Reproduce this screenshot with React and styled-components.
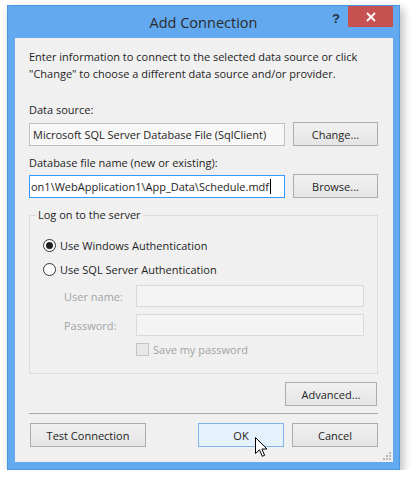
import React from "react";
import styled, { createGlobalStyle } from "styled-components";

const GlobalStyle = createGlobalStyle`
  body {
    margin: 0;
    background: #ffffff;
    font-family: "Open Sans", "Noto Sans", sans-serif;
    font-size: 11px;
    color: #1e1e1e;
  }
`;

const Page = styled.div`
  padding: 5px 0 0 7px;
`;

const Window = styled.div`
  position: relative;
  width: 393px;
  height: 465px;
  box-sizing: border-box;
  background: #63a9ef;
  border: 1px solid #4d95dd;
  display: flex;
  flex-direction: column;
  box-shadow: 3px 4px 9px rgba(0, 0, 0, 0.28);
`;

const TitleBar = styled.div`
  height: 32px;
  display: grid;
  grid-template-columns: 1fr auto 1fr;
`;

const Title = styled.div`
  grid-column: 2;
  align-self: center;
  font-size: 14.5px;
  color: #2b2b2b;
  padding-top: 1px;
`;

const Controls = styled.div`
  grid-column: 3;
  display: flex;
  justify-content: flex-end;
  align-items: flex-start;
  padding-right: 6px;
`;

const HelpButton = styled.div`
  width: 14px;
  margin-right: 5px;
  margin-top: 5px;
  font-family: "Liberation Sans", sans-serif;
  font-weight: bold;
  font-size: 13px;
  color: #23303d;
  text-align: center;
`;

const CloseButton = styled.div`
  width: 45px;
  height: 21px;
  background: #c75050;
  display: flex;
  align-items: center;
  justify-content: center;
`;

const Client = styled.div`
  position: relative;
  flex: 1;
  margin: 0 6px 7px 7px;
  background: #f0f0f0;
  padding: 0 15px 0 14px;
  display: flex;
  flex-direction: column;
`;

const Intro = styled.p`
  margin: 10px 0 0;
  line-height: 17px;
`;

const Label = styled.div`
  margin-top: ${(p) => p.top}px;
  line-height: 16px;
`;

const FieldRow = styled.div`
  margin-top: ${(p) => p.top}px;
  display: flex;
  align-items: center;
  gap: 8px;
  height: 24px;
`;

const TextBox = styled.div`
  flex: 1;
  height: 23px;
  box-sizing: border-box;
  border: 1px solid ${(p) => (p.focused ? "#3399ff" : "#bfbfbf")};
  background: ${(p) => (p.focused ? "#ffffff" : "#f7f7f7")};
  display: flex;
  align-items: center;
  padding-left: ${(p) => (p.focused ? 1 : 3)}px;
  overflow: hidden;
  white-space: nowrap;
`;

const Caret = styled.span`
  display: inline-block;
  width: 1px;
  height: 15px;
  background: #000;
  margin-left: 1px;
`;

const Button = styled.div`
  width: ${(p) => p.w}px;
  height: 24px;
  box-sizing: border-box;
  border: 1px solid ${(p) => (p.hot ? "#7eb4ea" : "#acacac")};
  background: ${(p) =>
    p.hot ? "#e5f1fb" : "linear-gradient(#f0f0f0, #e5e5e5)"};
  display: flex;
  align-items: center;
  justify-content: center;
  flex-shrink: 0;
`;

const Group = styled.fieldset`
  margin: 9px 0 0;
  padding: 14px 13px 16px;
  border: 1px solid #dcdcdc;
  display: flex;
  flex-direction: column;
`;

const Legend = styled.legend`
  margin-left: -7px;
  padding: 0 2px;
  line-height: 16px;
`;

const Option = styled.div`
  display: flex;
  align-items: center;
  height: 16px;
  margin-top: ${(p) => p.top || 0}px;
  gap: 4px;
`;

const Radio = styled.span`
  width: 13px;
  height: 13px;
  box-sizing: border-box;
  border-radius: 50%;
  border: 1px solid #333;
  background: #fff;
  display: flex;
  align-items: center;
  justify-content: center;
  &::after {
    content: "";
    width: 7px;
    height: 7px;
    border-radius: 50%;
    background: ${(p) => (p.checked ? "#1f1f1f" : "transparent")};
  }
`;

const CredRow = styled.div`
  display: flex;
  align-items: center;
  margin-top: ${(p) => p.top}px;
  padding-left: 21px;
`;

const DimLabel = styled.span`
  width: 72px;
  color: #a3a3a3;
`;

const DimBox = styled.div`
  flex: 1;
  height: 22px;
  box-sizing: border-box;
  border: 1px solid #d9d9d9;
  background: #f4f4f4;
`;

const CheckRow = styled.div`
  display: flex;
  align-items: center;
  gap: 4px;
  margin-top: 5px;
  padding-left: 93px;
  height: 16px;
  color: #a3a3a3;
`;

const CheckBox = styled.span`
  width: 13px;
  height: 13px;
  box-sizing: border-box;
  border: 1px solid #c4c4c4;
  background: #e8e8e8;
`;

const RightRow = styled.div`
  margin-top: 8px;
  display: flex;
  justify-content: flex-end;
  padding-right: 1px;
`;

const Separator = styled.div`
  margin-top: 7px;
  height: 1px;
  background: #a8a8a8;
`;

const ButtonBar = styled.div`
  margin-top: 9px;
  display: flex;
  align-items: center;
  gap: 8px;
  padding-left: 1px;
`;

const Spacer = styled.div`
  flex: 1;
`;

const Grip = styled.svg`
  position: absolute;
  right: 2px;
  bottom: 2px;
`;

const Pointer = styled.svg`
  position: absolute;
  left: 240px;
  top: 399px;
`;

export default function App() {
  return (
    <>
      <GlobalStyle />
      <Page>
        <Window>
          <TitleBar>
            <Title>Add Connection</Title>
            <Controls>
              <HelpButton>?</HelpButton>
              <CloseButton>
                <svg width="10" height="10" viewBox="0 0 10 10">
                  <path d="M1 1 L9 9 M9 1 L1 9" stroke="#fff" strokeWidth="1.8" />
                </svg>
              </CloseButton>
            </Controls>
          </TitleBar>
          <Client>
            <Intro>
              Enter information to connect to the selected data source or click
              <br />
              "Change" to choose a different data source and/or provider.
            </Intro>
            <Label top={20}>Data source:</Label>
            <FieldRow top={4}>
              <TextBox>Microsoft SQL Server Database File (SqlClient)</TextBox>
              <Button w={85}>Change...</Button>
            </FieldRow>
            <Label top={9}>Database file name (new or existing):</Label>
            <FieldRow top={3}>
              <TextBox focused>
                on1\WebApplication1\App_Data\Schedule.mdf
                <Caret />
              </TextBox>
              <Button w={85}>Browse...</Button>
            </FieldRow>
            <Group>
              <Legend>Log on to the server</Legend>
              <Option>
                <Radio checked />
                Use Windows Authentication
              </Option>
              <Option top={8}>
                <Radio />
                Use SQL Server Authentication
              </Option>
              <CredRow top={8}>
                <DimLabel>User name:</DimLabel>
                <DimBox />
              </CredRow>
              <CredRow top={7}>
                <DimLabel>Password:</DimLabel>
                <DimBox />
              </CredRow>
              <CheckRow>
                <CheckBox />
                Save my password
              </CheckRow>
            </Group>
            <RightRow>
              <Button w={92}>Advanced...</Button>
            </RightRow>
            <Separator />
            <ButtonBar>
              <Button w={116}>Test Connection</Button>
              <Spacer />
              <Button w={86} hot>
                OK
              </Button>
              <Button w={86}>Cancel</Button>
            </ButtonBar>
            <Grip width="8" height="8" viewBox="0 0 8 8">
              <g fill="#b8b8b8">
                <rect x="6" y="0" width="2" height="2" />
                <rect x="3" y="3" width="2" height="2" />
                <rect x="6" y="3" width="2" height="2" />
                <rect x="0" y="6" width="2" height="2" />
                <rect x="3" y="6" width="2" height="2" />
                <rect x="6" y="6" width="2" height="2" />
              </g>
            </Grip>
            <Pointer width="14" height="22" viewBox="0 0 14 22">
              <path
                d="M0.5 0.5 L0.5 16.5 L4.5 12.8 L7.3 19.3 L9.6 18.3 L6.9 12 L12 12 Z"
                fill="#fff"
                stroke="#000"
                strokeWidth="1"
                strokeLinejoin="miter"
              />
            </Pointer>
          </Client>
        </Window>
      </Page>
    </>
  );
}
